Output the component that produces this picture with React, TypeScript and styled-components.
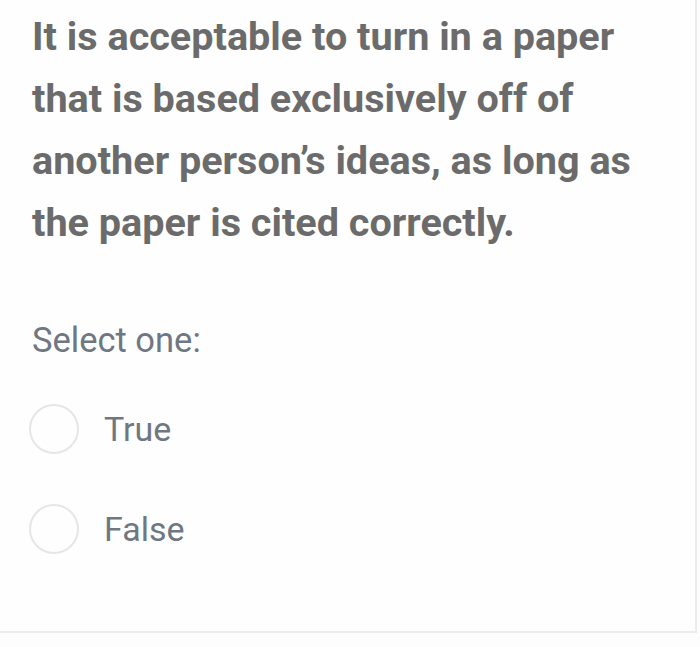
import React, { useState } from 'react';
import styled, { createGlobalStyle } from 'styled-components';

const GlobalStyle = createGlobalStyle`
  html, body {
    margin: 0;
    padding: 0;
    background: #fdfdfd;
  }
  body {
    font-family: Roboto, "Noto Sans", Arial, sans-serif;
  }
`;

const options = ['True', 'False'];

const App: React.FC = () => {
  const [selected, setSelected] = useState<string | null>(null);

  return (
    <>
      <GlobalStyle />
      <Card>
        <Question>
          It is acceptable to turn in a paper that is based exclusively off of another person’s ideas, as long as
          the paper is cited correctly.
        </Question>
        <Prompt>Select one:</Prompt>
        <Options>
          {options.map((opt) => (
            <Option key={opt} onClick={() => setSelected(opt)}>
              <Radio checked={selected === opt} />
              <OptionLabel>{opt}</OptionLabel>
            </Option>
          ))}
        </Options>
      </Card>
    </>
  );
};

const Card = styled.div`
  width: 697px;
  height: 633px;
  box-sizing: border-box;
  background: #fefefe;
  border-right: 2px solid #ececec;
  border-bottom: 2px solid #ececec;
  padding: 6px 0 0 32px;
`;

const Question = styled.div`
  width: 620px;
  font-size: 39.6px;
  font-weight: 700;
  line-height: 62px;
  color: #6b6b6b;
`;

const Prompt = styled.div`
  margin-top: 66px;
  font-size: 34.5px;
  line-height: 40px;
  color: #6f7782;
`;

const Options = styled.div`
  display: flex;
  flex-direction: column;
  gap: 50px;
  margin-top: 44px;
  margin-left: -3px;
`;

const Option = styled.label`
  display: flex;
  align-items: center;
  gap: 25px;
  height: 50px;
  cursor: pointer;
`;

const Radio = styled.span<{ checked: boolean }>`
  width: 50px;
  height: 50px;
  box-sizing: border-box;
  border-radius: 50%;
  border: 2px solid #e6e6e6;
  background: ${(p) => (p.checked ? '#6f7782' : 'transparent')};
  box-shadow: ${(p) => (p.checked ? 'inset 0 0 0 10px #fefefe' : 'none')};
`;

const OptionLabel = styled.span`
  font-size: 34px;
  color: #6f7782;
`;

export default App;
